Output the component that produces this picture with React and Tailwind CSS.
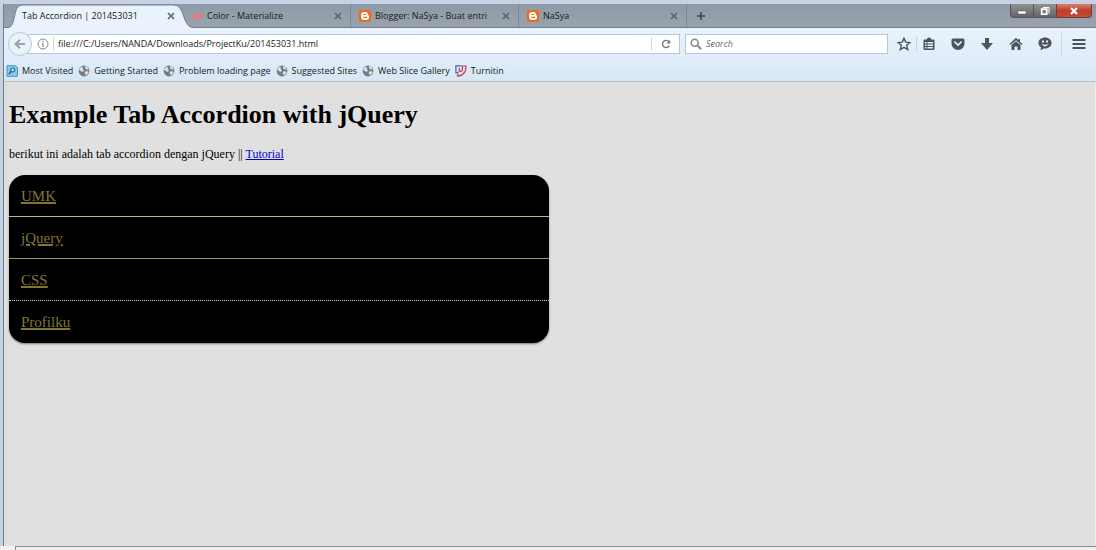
import React from "react";

const tabs = [
  { title: "Color - Materialize", icon: "materialize" },
  { title: "Blogger: NaSya - Buat entri", icon: "blogger" },
  { title: "NaSya", icon: "blogger" },
];

const bookmarks = [
  { label: "Most Visited", icon: "visited" },
  { label: "Getting Started", icon: "globe" },
  { label: "Problem loading page", icon: "globe" },
  { label: "Suggested Sites", icon: "globe" },
  { label: "Web Slice Gallery", icon: "globe" },
  { label: "Turnitin", icon: "turnitin" },
];

const sections = [
  { title: "UMK", border: "border-b border-[#a5c08c]" },
  { title: "jQuery", border: "border-b border-[#82ab50]" },
  { title: "CSS", border: "border-b border-dotted border-[#c3d6ae]" },
  { title: "Profilku", border: "" },
];

function SiteIcon({ name }) {
  if (name === "materialize") {
    return (
      <svg className="w-3 h-3 shrink-0" viewBox="0 0 12 12" fill="none" stroke="#e87883" strokeWidth="1.6" strokeLinecap="round">
        <path d="M1 9 2.8 4M4 9 6.3 3.5Q7 2.5 6.8 4L5.5 9M8 9 10 3.5Q11 2.5 10.8 4L10 9" />
      </svg>
    );
  }
  if (name === "blogger") {
    return (
      <svg className="w-3 h-3 shrink-0" viewBox="0 0 12 12">
        <rect width="12" height="12" rx="2" fill="#ee6b1c" />
        <path d="M4.8 2h1.7C8 2 8.7 3 8.7 4.2c0 .8.2 1 .7 1 .5.1.6.4.6.8v1.3C10 8.9 9 10 7.4 10H4.8C3.2 10 2.2 9 2.2 7.5v-3C2.2 3 3.2 2 4.8 2Z" fill="#fff" />
        <path d="M4.7 4.5h1.7M4.7 7.4h2.9" stroke="#ee6b1c" strokeWidth="1.1" strokeLinecap="round" />
      </svg>
    );
  }
  if (name === "visited") {
    return (
      <svg className="w-3 h-3 shrink-0" viewBox="0 0 12 12">
        <path d="M1 .7h8.5L11.5 3v8.3H1Z" fill="#8cc6ea" stroke="#4b92c2" />
        <circle cx="6.7" cy="5" r="2" fill="#bfe3f7" stroke="#176799" strokeWidth="1.2" />
        <path d="M5.2 6.4 2.8 9.2" fill="none" stroke="#176799" strokeWidth="1.5" />
      </svg>
    );
  }
  if (name === "turnitin") {
    return (
      <svg className="w-3 h-3 shrink-0" viewBox="0 0 12 12" fill="none">
        <path d="M3.5 7.7H.9V.9h5.6" stroke="#3f69ad" strokeWidth="1.2" />
        <path d="M4.2 2.8v3.4q1.800.6 3.200-.6V1h3.600c.2 5-1.2 9-7.600 10.200-1.500 0-1.500-1.500.2-2.200" stroke="#d52f55" strokeWidth="1.2" />
      </svg>
    );
  }
  return (
    <svg className="w-3 h-3 shrink-0" viewBox="0 0 12 12">
      <circle cx="6" cy="6" r="5.4" fill="#777c82" />
      <path d="M1 4.2 3.2 2l2 .2-.8 1.6L6 5.2 4.7 7 2.8 6ZM7 1l2.5 1.2 1 2.2-2 .2L7 3ZM7 6.5l2.8-.3.8 1.3-2.4 2.8-1.4-1.5Z" fill="#dde4ea" />
    </svg>
  );
}

function CloseIcon() {
  return (
    <svg className="w-2 h-2" viewBox="0 0 8 8" fill="none" stroke="#59646e" strokeWidth="1.6">
      <path d="m1 1 6 6M7 1 1 7" />
    </svg>
  );
}

function TabStrip() {
  return (
    <div className="flex items-stretch h-6 bg-linear-to-b from-[#8e9aa7] to-[#98a3ae] border-b border-[#737e89] pl-[3px]">
      <div className="relative w-44 h-6 shrink-0 flex items-center pl-[15px] pr-2">
        <svg className="absolute left-0 top-0 w-48 h-6" viewBox="0 0 192 24">
          <path d="M1 24C10 23 5 1 15 1h152c11 0 8 22 19 23Z" fill="#eaf3fd" />
          <path d="M1 23.5C10 22.5 5 1 15 1h152c11 0 8 21.5 19 22.5" fill="none" stroke="#77828d" />
        </svg>
        <span className="relative flex-1 truncate">Tab Accordion | 201453031</span>
        <button aria-label="Close tab" className="relative"><CloseIcon /></button>
      </div>
      {tabs.map((tab) => (
        <div key={tab.title} className="w-42 pl-2 shrink-0 flex items-center pr-2 border-r border-[#7b8691]">
          <SiteIcon name={tab.icon} />
          <span className="flex-1 truncate ml-1">{tab.title}</span>
          <button aria-label="Close tab"><CloseIcon /></button>
        </div>
      ))}
      <button aria-label="New tab" className="ml-1 px-1">
        <svg className="w-3 h-3" viewBox="0 0 12 12" stroke="#3c4650" strokeWidth="1.6"><path d="M6 2v8M2 6h8" /></svg>
      </button>
      <div className="ml-auto mr-1 flex h-4 text-white">
        <button aria-label="Minimize" className="w-6 h-3.5 rounded-bl border border-t-0 border-[#4e565e] bg-linear-to-b from-[#929292] to-[#656565] flex justify-center items-center">
          <svg className="w-3 h-3" viewBox="0 0 12 12"><path d="M2 6h8v3H2Z" fill="#fff" stroke="#555" strokeWidth=".5" /></svg>
        </button>
        <button aria-label="Restore" className="w-[22px] h-3.5 border-b border-[#4e565e] bg-linear-to-b from-[#929292] to-[#656565] flex justify-center items-center">
          <svg className="w-3 h-3" viewBox="0 0 12 12" fill="none" stroke="#fff"><path d="M4 2.5h6v6" /><path d="M2.7 4.2h5v5h-5Z" strokeWidth="1.8" /></svg>
        </button>
        <button aria-label="Close window" className="w-9 h-3.5 rounded-br border border-t-0 border-[#6b4140] bg-linear-to-b from-[#d6816d] via-[#bd3e29] to-[#c64a32] flex justify-center items-center">
          <svg className="w-2 h-2" viewBox="0 0 8 8" stroke="#fff" strokeWidth="2.2"><path d="m1 1 6 6M7 1 1 7" /></svg>
        </button>
      </div>
    </div>
  );
}

function ToolButton({ label, children }) {
  return (
    <button aria-label={label} className="shrink-0">
      <svg className="w-3.5 h-3.5" viewBox="0 0 14 14" fill="#4c545c">{children}</svg>
    </button>
  );
}

function NavBar() {
  return (
    <div className="flex items-center h-8 pl-1 pr-2.5">
      <button aria-label="Back" className="relative z-10 w-6 h-6 shrink-0 rounded-full border border-[#b9c9d8] bg-[#eaf2fa] flex items-center justify-center">
        <svg className="w-3 h-3" viewBox="0 0 14 14" fill="none" stroke="#9aa3ac" strokeWidth="2.6"><path d="M7 2 2 7l5 5M2 7h11" /></svg>
      </button>
      <div className="flex flex-1 items-center h-5 -ml-1 pl-2 bg-white border border-[#b4c8db]">
        <svg className="w-3 h-3 shrink-0" viewBox="0 0 12 12" fill="none" stroke="#888e94">
          <circle cx="6" cy="6" r="5" /><path d="M6 5v4M6 2.8V4" strokeWidth="1.3" />
        </svg>
        <span className="w-px h-3.5 ml-1 bg-[#cfd4d8]" />
        <input aria-label="Address" defaultValue="file:///C:/Users/NANDA/Downloads/ProjectKu/201453031.html" className="flex-1 min-w-0 h-4 pl-1 bg-transparent outline-none" />
        <button aria-label="Reload" className="w-7 h-3.5 border-l border-[#cfd9e2] flex items-center justify-center">
          <svg className="w-2.5 h-2.5" viewBox="0 0 10 10" fill="none" stroke="#70777e" strokeWidth="1.4"><path d="M8.4 6.4A3.6 3.6 0 1 1 8 2.9" /><path d="M9.2.8v3.8H5.4Z" fill="#70777e" stroke="none" /></svg>
        </button>
      </div>
      <div className="flex items-center w-[203px] h-5 ml-[5px] pl-1 bg-white border border-[#b4c8db]">
        <svg className="w-3 h-3 shrink-0" viewBox="0 0 12 12" fill="none" stroke="#848a90"><circle cx="4.7" cy="4.7" r="3.5" strokeWidth="1.5" /><path d="m7.4 7.4 3.8 3.8" strokeWidth="2" /></svg>
        <input aria-label="Search" placeholder="Search" className="flex-1 min-w-0 h-4 pl-1 bg-transparent outline-none placeholder:italic placeholder:text-[#666]" />
      </div>
      <div className="flex items-center gap-[5px] ml-[9px]">
        <ToolButton label="Bookmark this page"><path d="m7 1.2 1.7 3.9 4.2.4-3.2 2.8 1 4.2L7 10.3l-3.7 2.2 1-4.2L1.1 5.5l4.2-.4Z" fill="none" stroke="#4c545c" strokeWidth="1.4" /></ToolButton>
        <span className="w-px h-3.5 bg-[#c5d3df]" />
        <ToolButton label="Bookmarks"><path fillRule="evenodd" d="M5 2.5V1.5Q7-.5 9 1.5v1h2.5Q12.5 2.5 12.5 3.5V12q0 1-1 1h-9q-1 0-1-1V3.5q0-1 1-1ZM3 5v1.5h1.5V5Zm2.5 0v1.5H11V5ZM3 7.5V9h1.5V7.5Zm2.5 0V9H11V7.5ZM3 10v1.5h1.5V10Zm2.5 0v1.5H11V10Z" /></ToolButton>
      </div>
      <div className="flex items-center gap-[15px] ml-[15px]">
        <ToolButton label="Pocket"><path d="M2 1.5h10q1.500 0 1.500 1.500v3.500a6.500 6.500 0 0 1-13 0V3Q.5 1.500 2 1.500Z" /><path d="m3.8 5 3.2 3 3.2-3" fill="none" stroke="#e8f1f9" strokeWidth="1.7" strokeLinecap="round" /></ToolButton>
        <ToolButton label="Downloads"><path d="M5 1h4v5h4l-6 7-6-7h4Z" /></ToolButton>
        <ToolButton label="Home"><path d="m7 .8 2.500 2.500V2H11v2.800L13.500 7l-.9 1L7 3.200 1.400 8l-.9-1Z" /><path d="M7 4.300 11.500 8v5h-3V9.500h-3V13h-3V8Z" /></ToolButton>
        <ToolButton label="Messages"><path fillRule="evenodd" d="M7 .5c3.7 0 6.5 2.3 6.5 5.5S10.7 11.5 7 11.5c-.5 0-1 0-1.500-.1L2.500 13.500l.5-3.200C1.400 9.300.5 7.800.5 6 .5 2.800 3.300.5 7 .5ZM4 3.500v2h2v-2Zm4 0v2h2v-2ZM3.200 7Q7 11.800 10.800 7 7 8.500 3.200 7Z" /></ToolButton>
      </div>
      <span className="w-px h-6 ml-[9px] bg-[#cbdae7]" />
      <div className="flex ml-2.5">
        <ToolButton label="Menu"><path d="M.5 2h13v2H.5ZM.5 6h13v2H.5ZM.5 10h13v2H.5Z" /></ToolButton>
      </div>
    </div>
  );
}

function BookmarksBar() {
  return (
    <nav className="flex items-center gap-[5px] h-[21px] pl-0.5">
      {bookmarks.map((bookmark) => (
        <a key={bookmark.label} href="#" className="flex items-center gap-1">
          <SiteIcon name={bookmark.icon} />
          {bookmark.label}
        </a>
      ))}
    </nav>
  );
}

function Accordion() {
  return (
    <div className="mt-[13px] w-[540px] max-w-full overflow-hidden rounded-2xl bg-black shadow-[0_1px_2px_#777]">
      {sections.map((section) => (
        <h3 key={section.title} className={`flex items-center h-[42px] pl-3 text-[15px] ${section.border}`}>
          <a href="#" className="text-[#82762f] underline decoration-2">{section.title}</a>
        </h3>
      ))}
    </div>
  );
}

function App() {
  return (
    <div className="min-h-screen flex flex-col bg-[#c6d2e4] pt-1 pl-[3px] font-['Open_Sans',sans-serif] text-[9px] leading-4 text-[#171b20]">
      <div className="flex flex-1 flex-col border-l border-[#737c85]">
        <header>
          <TabStrip />
          <div className="bg-linear-to-b from-[#eaf3fd] to-[#d8e7f5] border-b border-[#b7bfc7]">
            <NavBar />
            <BookmarksBar />
          </div>
        </header>
        <main className="flex-1 bg-[#e0e0e0] border-r border-[#eeeeee] px-[5px] pt-[17px] font-['Liberation_Serif',serif] text-black">
          <h1 className="text-[26px] leading-8 font-bold">Example Tab Accordion with jQuery</h1>
          <p className="mt-[15px] text-xs leading-4">
            berikut ini adalah tab accordion dengan jQuery || <a href="#" className="text-[#0000cc] underline">Tutorial</a>
          </p>
          <Accordion />
        </main>
      </div>
      <footer className="h-1 -ml-[3px] pl-[15px] bg-[#f1f1f1]">
        <div className="h-1 border-l border-t border-[#8b8b8b]" />
      </footer>
    </div>
  );
}

export default App;
